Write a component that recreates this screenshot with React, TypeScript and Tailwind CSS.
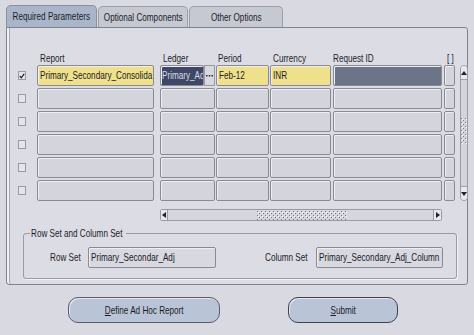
import React from "react";

const font = {
  fontFamily: '"Liberation Sans", Arial, sans-serif',
};

function T({ children, center }: { children?: React.ReactNode; center?: boolean }) {
  return (
    <span
      className={`inline-block whitespace-nowrap scale-x-[0.74] ${center ? "origin-center" : "origin-left"}`}
    >
      {children}
    </span>
  );
}

function Field({
  w,
  className = "",
  children,
}: {
  w: string;
  className?: string;
  children?: React.ReactNode;
}) {
  return (
    <div
      className={`${w} h-[21px] shrink-0 overflow-hidden whitespace-nowrap rounded-[2px] border border-[#8a8a94] pl-[2px] text-[11px] leading-[19px] shadow-[inset_1px_1px_0_#eeeef2] ${className}`}
    >
      {children ? <T>{children}</T> : null}
    </div>
  );
}

function Check({ checked }: { checked?: boolean }) {
  return (
    <div className="flex w-[30px] shrink-0 items-center justify-center">
      <div className="flex h-[9px] w-[8px] items-center justify-center border border-[#9a9aa4] bg-[#e4e4ea]">
        {checked && (
          <svg width="8" height="8" viewBox="0 0 8 8">
            <path d="M1 4 L3 6.5 L7 1" stroke="#111" strokeWidth="1.6" fill="none" />
          </svg>
        )}
      </div>
    </div>
  );
}

function Row({ first }: { first?: boolean }) {
  const empty = "bg-[#d4d4dc]";
  return (
    <div className="flex h-[21px] items-center">
      <Check checked={first} />
      <Field w="w-[117px]" className={first ? "bg-[#efe08c]" : empty}>
        {first ? "Primary_Secondary_Consolida" : ""}
      </Field>
      <div className="w-[6px]" />
      {first ? (
        <>
          <Field w="w-[44px]" className="bg-[#3e4866] text-[#d8dcea] !pl-[1px]">
            Primary_Ad
          </Field>
          <div className="flex h-[21px] w-[11px] shrink-0 items-center justify-center border border-[#9a9aa4] bg-[#d8d8e0] text-[10px] leading-none">
            <svg width="7" height="2" viewBox="0 0 7 2">
              <rect x="0" y="0" width="1.5" height="1.5" fill="#222" />
              <rect x="2.75" y="0" width="1.5" height="1.5" fill="#222" />
              <rect x="5.5" y="0" width="1.5" height="1.5" fill="#222" />
            </svg>
          </div>
        </>
      ) : (
        <Field w="w-[55px]" className={empty} />
      )}
      <div className="w-[1px]" />
      <Field w="w-[53px]" className={first ? "bg-[#efe08c]" : empty}>
        {first ? "Feb-12" : ""}
      </Field>
      <div className="w-[1px]" />
      <Field w="w-[61px]" className={first ? "bg-[#efe08c]" : empty}>
        {first ? "INR" : ""}
      </Field>
      <div className="w-[2px]" />
      <Field w="w-[109px]" className={first ? "bg-[#6c7588]" : empty} />
      <div className="w-[2px]" />
      <Field w="w-[11px]" className={empty} />
    </div>
  );
}

function Dots({ w, h, id }: { w: number; h: number; id: string }) {
  return (
    <svg width={w} height={h}>
      <defs>
        <pattern id={id} width="4" height="4" patternUnits="userSpaceOnUse">
          <rect x="0" y="0" width="1" height="1" fill="#7a7a88" />
          <rect x="2" y="2" width="1" height="1" fill="#7a7a88" />
          <rect x="1" y="1" width="1" height="1" fill="#ffffff" />
        </pattern>
      </defs>
      <rect width={w} height={h} fill={`url(#${id})`} />
    </svg>
  );
}

export default function App() {
  return (
    <div
      className="h-[335px] w-[474px] overflow-hidden bg-[#d9d9e1] text-[#1c1c28]"
      style={font}
    >
      {/* Tabs */}
      <div className="flex h-[27px] items-end pl-[6px] pt-[5px]">
        <div className="flex h-[22px] w-[91px] items-center justify-center rounded-t-[5px] border border-b-0 border-[#8892a4] bg-[#a9b6ca] text-[11px]">
          <T center>Required Parameters</T>
        </div>
        <div className="ml-[1px] flex h-[21px] w-[90px] items-center justify-center rounded-t-[5px] border border-b-0 border-[#9c9ea8] bg-[#c6c9d1] text-[11px]">
          <T center>Optional Components</T>
        </div>
        <div className="ml-[1px] flex h-[21px] w-[94px] items-center justify-center rounded-t-[5px] border border-b-0 border-[#9c9ea8] bg-[#c6c9d1] text-[11px]">
          <T center>Other Options</T>
        </div>
      </div>

      {/* Panel */}
      <div className="mx-[6px] h-[258px] rounded-b-[3px] rounded-tr-[3px] border border-[#80828e] bg-[#dcdce4] shadow-[inset_2px_0_0_#f2f2f6,inset_3px_0_0_#a8a8b2]">
        <div className="flex pt-[22px]">
          <div className="flex flex-col">
            {/* header */}
            <div className="flex h-[14px] items-end text-[11px] leading-[12px]">
              <div className="w-[33px]" />
              <div className="w-[123px]"><T>Report</T></div>
              <div className="w-[55px]"><T>Ledger</T></div>
              <div className="w-[55px]"><T>Period</T></div>
              <div className="w-[60px]"><T>Currency</T></div>
              <div className="w-[114px]"><T>Request ID</T></div>
              <div className="w-[11px]"><T>[ ]</T></div>
            </div>
            <div className="mt-[1px] flex flex-col gap-[2px]">
              <Row first />
              <Row />
              <Row />
              <Row />
              <Row />
              <Row />
            </div>
            {/* horizontal scrollbar */}
            <div className="ml-[153px] mt-[8px] flex h-[12px] w-[282px] items-center rounded-[2px] border border-[#9a9aa6] bg-[#d6d6de]">
              <div className="flex h-full w-[7px] items-center justify-center border-r border-[#9a9aa6] bg-[#e6e6ec]">
                <svg width="4" height="6" viewBox="0 0 4 6">
                  <path d="M4 0 L0 3 L4 6 Z" fill="#222" />
                </svg>
              </div>
              <div className="ml-[89px] flex h-[10px] items-center">
                <Dots w={90} h={9} id="hd" />
              </div>
              <div className="ml-auto flex h-full w-[8px] items-center justify-center border-l border-[#9a9aa6] bg-[#e6e6ec]">
                <svg width="4" height="6" viewBox="0 0 4 6">
                  <path d="M0 0 L4 3 L0 6 Z" fill="#222" />
                </svg>
              </div>
            </div>
          </div>
          {/* vertical scrollbar */}
          <div className="ml-[2px] mt-[15px] flex h-[136px] w-[10px] flex-col items-center rounded-[4px] border border-[#9a9aa6] bg-[#d4d4dc]">
            <div className="flex h-[14px] w-full items-center justify-center rounded-t-[4px] border-b border-[#a0a0aa] bg-[#e8e8ee]">
              <svg width="6" height="4" viewBox="0 0 6 4">
                <path d="M0 4 L3 0 L6 4 Z" fill="#222" />
              </svg>
            </div>
            <div className="mt-[38px]">
              <Dots w={6} h={26} id="vd" />
            </div>
            <div className="mt-auto flex h-[14px] w-full items-center justify-center rounded-b-[4px] border-t border-[#a0a0aa] bg-[#e8e8ee]">
              <svg width="6" height="4" viewBox="0 0 6 4">
                <path d="M0 0 L3 4 L6 0 Z" fill="#222" />
              </svg>
            </div>
          </div>
        </div>

        {/* Group box */}
        <div className="relative ml-[16px] mt-[12px] h-[46px] w-[434px] rounded-[3px] border border-[#9a9aa6] shadow-[1px_1px_0_#f4f4f8]">
          <div className="absolute left-[6px] top-[-8px] w-[96px] bg-[#dcdce4] px-[1px] text-[11px] leading-[14px]">
            <T>Row Set and Column Set</T>
          </div>
          <div className="flex h-full items-center pt-[2px] text-[11px]">
            <div className="ml-[26px] w-[38px]"><T>Row Set</T></div>
            <Field w="w-[128px]" className="bg-[#d8d8e0] h-[20px]">
              Primary_Secondar_Adj
            </Field>
            <div className="ml-[49px] w-[51px]"><T>Column Set</T></div>
            <Field w="w-[127px]" className="bg-[#d8d8e0] h-[20px]">
              Primary_Secondary_Adj_Column
            </Field>
          </div>
        </div>
      </div>

      {/* Buttons */}
      <div className="mt-[12px] flex">
        <div className="ml-[68px] flex h-[26px] w-[152px] items-center justify-center rounded-[10px] border border-[#5a5e6c] bg-[#b9c4d6] text-[11px] shadow-[inset_1px_1px_0_#e4e8f0]">
          <T center>
            <span className="underline">D</span>efine Ad Hoc Report
          </T>
        </div>
        <div className="ml-[68px] flex h-[26px] w-[110px] items-center justify-center rounded-[10px] border-[1.5px] border-[#3e4250] bg-[#b9c4d6] text-[11px] shadow-[inset_1px_1px_0_#e4e8f0]">
          <T center>
            <span className="underline">S</span>ubmit
          </T>
        </div>
      </div>
    </div>
  );
}
